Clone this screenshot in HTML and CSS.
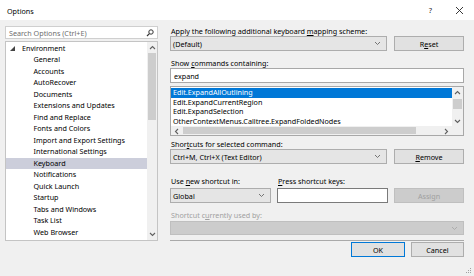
FILE: index.html
```html
<!DOCTYPE html>
<html lang="en">
<head>
    <meta charset="UTF-8">
    <title>Options</title>
    <link rel="stylesheet" href="styles.css">
</head>
<body>
    <div class="titlebar">
        <span class="title">Options</span>
        <span class="title-btn">?</span>
        <span class="title-btn">
            <svg width="9" height="9" viewBox="0 0 9 9"><path d="M1 1L8 8M8 1L1 8" stroke="#222" stroke-width="0.9"/></svg>
        </span>
    </div>

    <div class="content">
        <div class="nav">
            <div class="search">
                <span class="placeholder">Search Options (Ctrl+E)</span>
                <svg width="8" height="8" viewBox="0 0 8 8"><circle cx="5" cy="3" r="2.2" fill="none" stroke="#333" stroke-width="1"/><path d="M3.4 4.6L1 7" stroke="#333" stroke-width="1.2"/></svg>
            </div>
            <div class="tree">
                <div class="tree-items">
                    <div class="node root"><svg class="expander" width="5" height="5" viewBox="0 0 5 5"><path d="M5 0V5H0Z" fill="#444"/></svg>Environment</div>
                    <div class="node">General</div>
                    <div class="node">Accounts</div>
                    <div class="node">AutoRecover</div>
                    <div class="node">Documents</div>
                    <div class="node">Extensions and Updates</div>
                    <div class="node">Find and Replace</div>
                    <div class="node">Fonts and Colors</div>
                    <div class="node">Import and Export Settings</div>
                    <div class="node">International Settings</div>
                    <div class="node selected">Keyboard</div>
                    <div class="node">Notifications</div>
                    <div class="node">Quick Launch</div>
                    <div class="node">Startup</div>
                    <div class="node">Tabs and Windows</div>
                    <div class="node">Task List</div>
                    <div class="node">Web Browser</div>
                    <div class="node root"><svg class="expander" width="5" height="6" viewBox="0 0 5 6"><path d="M0.5 0.5L4 3L0.5 5.5Z" fill="none" stroke="#444" stroke-width="0.8"/></svg>Projects and Solutions</div>
                </div>
                <div class="vscroll">
                    <div class="sb-arrow"><svg width="7" height="5" viewBox="0 0 7 5"><path d="M1 4L3.5 1.5L6 4" fill="none" stroke="#606060" stroke-width="1.1"/></svg></div>
                    <div class="thumb tree-thumb"></div>
                    <div class="track"></div>
                    <div class="sb-arrow"><svg width="7" height="5" viewBox="0 0 7 5"><path d="M1 1L3.5 3.5L6 1" fill="none" stroke="#606060" stroke-width="1.1"/></svg></div>
                </div>
            </div>
        </div>

        <div class="keys">
            <div class="lbl">Apply the following additional keyboard <u>m</u>apping scheme:</div>
            <div class="row">
                <div class="select">(Default)<svg class="chev" width="7" height="5" viewBox="0 0 7 5"><path d="M1 1L3.5 3.5L6 1" fill="none" stroke="#666" stroke-width="0.9"/></svg></div>
                <div class="button">R<u>e</u>set</div>
            </div>

            <div class="lbl gap">Show <u>c</u>ommands containing:</div>
            <div class="input">expand</div>

            <div class="list">
                <div class="list-body">
                    <div class="list-items">
                        <div class="item selected">Edit.ExpandAllOutlining</div>
                        <div class="item">Edit.ExpandCurrentRegion</div>
                        <div class="item">Edit.ExpandSelection</div>
                        <div class="item">OtherContextMenus.Calltree.ExpandFoldedNodes</div>
                    </div>
                    <div class="vscroll">
                        <div class="sb-arrow"><svg width="7" height="5" viewBox="0 0 7 5"><path d="M1 4L3.5 1.5L6 4" fill="none" stroke="#606060" stroke-width="1.1"/></svg></div>
                        <div class="thumb list-thumb"></div>
                        <div class="track"></div>
                        <div class="sb-arrow"><svg width="7" height="5" viewBox="0 0 7 5"><path d="M1 1L3.5 3.5L6 1" fill="none" stroke="#606060" stroke-width="1.1"/></svg></div>
                    </div>
                </div>
                <div class="hscroll">
                    <div class="sb-arrow"><svg width="5" height="7" viewBox="0 0 5 7"><path d="M4 1L1.5 3.5L4 6" fill="none" stroke="#606060" stroke-width="1.1"/></svg></div>
                    <div class="thumb list-hthumb"></div>
                    <div class="track"></div>
                    <div class="sb-arrow"><svg width="5" height="7" viewBox="0 0 5 7"><path d="M1 1L3.5 3.5L1 6" fill="none" stroke="#606060" stroke-width="1.1"/></svg></div>
                    <div class="corner"></div>
                </div>
            </div>

            <div class="lbl gap-sm">Shor<u>t</u>cuts for selected command:</div>
            <div class="row">
                <div class="select">Ctrl+M, Ctrl+X (Text Editor)<svg class="chev" width="7" height="5" viewBox="0 0 7 5"><path d="M1 1L3.5 3.5L6 1" fill="none" stroke="#666" stroke-width="0.9"/></svg></div>
                <div class="button"><u>R</u>emove</div>
            </div>

            <div class="grid labels">
                <div class="lbl">Use <u>n</u>ew shortcut in:</div>
                <div class="lbl"><u>P</u>ress shortcut keys:</div>
            </div>
            <div class="grid">
                <div class="select">Global<svg class="chev" width="7" height="5" viewBox="0 0 7 5"><path d="M1 1L3.5 3.5L6 1" fill="none" stroke="#666" stroke-width="0.9"/></svg></div>
                <div class="input dark"></div>
                <div class="button disabled">Assign</div>
            </div>

            <div class="lbl gap disabled-text">Shortcut c<u>u</u>rrently used by:</div>
            <div class="select disabled"><svg class="chev" width="7" height="5" viewBox="0 0 7 5"><path d="M1 1L3.5 3.5L6 1" fill="none" stroke="#a8a8a8" stroke-width="0.9"/></svg></div>

            <div class="separator"></div>
        </div>
    </div>

    <div class="footer">
        <div class="button default">OK</div>
        <div class="button cancel">Cancel</div>
    </div>

    <svg class="grip" width="6" height="6" viewBox="0 0 6 6"><rect x="4" y="0" width="1" height="1" fill="#a0a0a0"/><rect x="2" y="2" width="1" height="1" fill="#a0a0a0"/><rect x="4" y="2" width="1" height="1" fill="#a0a0a0"/><rect x="0" y="4" width="1" height="1" fill="#a0a0a0"/><rect x="2" y="4" width="1" height="1" fill="#a0a0a0"/><rect x="4" y="4" width="1" height="1" fill="#a0a0a0"/></svg>
</body>
</html>
```

FILE: styles.css
```css
body {
    margin: 0;
    width: 474px;
    height: 276px;
    overflow: hidden;
    position: relative;
    background-color: #f0f0f0;
    font-family: "Noto Sans", "Open Sans", sans-serif;
    font-size: 7.2px;
    color: #000;
}

u {
    text-underline-offset: 1px;
    text-decoration-thickness: 0.6px;
}

.titlebar {
    height: 20px;
    background-color: #fff;
    display: flex;
    align-items: center;
}

.title {
    flex: 1;
    padding-left: 7px;
    padding-top: 1px;
}

.title-btn {
    width: 29px;
    height: 20px;
    display: flex;
    align-items: center;
    justify-content: center;
    font-size: 7.5px;
    color: #222;
}

.content {
    display: flex;
    gap: 12px;
    padding: 6px 10px 0 5px;
}

/* left: options tree */
.nav {
    width: 153px;
    display: flex;
    flex-direction: column;
    gap: 2px;
}

.search {
    height: 13px;
    box-sizing: border-box;
    border: 1px solid #cfcfcf;
    background-color: #fff;
    display: flex;
    align-items: center;
    justify-content: space-between;
    padding: 0 3px 0 3px;
}

.placeholder {
    color: #6d6d6d;
}

.tree {
    height: 200px;
    box-sizing: border-box;
    border: 1px solid #c4c4c4;
    background-color: #fff;
    display: flex;
}

.tree-items {
    flex: 1;
    overflow: hidden;
    padding-top: 0.5px;
}

.node {
    height: 11.5px;
    line-height: 11.5px;
    padding-left: 27.5px;
    white-space: nowrap;
}

.node.root {
    padding-left: 4px;
}

.node .expander {
    margin-right: 7px;
    vertical-align: 0;
}

.node.selected {
    background-color: #cccedb;
}

.vscroll {
    width: 10px;
    background-color: #f0f0f0;
    display: flex;
    flex-direction: column;
}

.sb-arrow {
    height: 11px;
    flex: none;
    display: flex;
    align-items: center;
    justify-content: center;
}

.hscroll .sb-arrow {
    width: 11px;
    height: auto;
}

.thumb {
    background-color: #cdcdcd;
    flex: none;
}

.tree-thumb {
    height: 67px;
    margin: 0 1px;
}

.track {
    flex: 1;
}

/* right: keyboard page */
.keys {
    width: 294px;
    display: flex;
    flex-direction: column;
}

.lbl {
    height: 10px;
    line-height: 10px;
    padding-left: 1px;
    white-space: nowrap;
}

.lbl.gap {
    margin-top: 7px;
}

.lbl.gap-sm {
    margin-top: 3px;
}

.disabled-text {
    color: #a0a0a0;
    margin-bottom: 1px;
}

.row {
    height: 15px;
    display: flex;
    gap: 7px;
}

.row .select {
    width: 217px;
}

.row .button {
    width: 70px;
}

.select {
    height: 15px;
    box-sizing: border-box;
    border: 1px solid #adadad;
    background-color: #e5e5e5;
    display: flex;
    align-items: center;
    padding: 0 5px 0 2px;
}

.select .chev {
    margin-left: auto;
}

.select.disabled {
    height: 14px;
    background-color: #cccccc;
    border-color: #bfbfbf;
}

.button {
    height: 15px;
    box-sizing: border-box;
    border: 1px solid #adadad;
    background-color: #e1e1e1;
    display: flex;
    align-items: center;
    justify-content: center;
}

.button.disabled {
    background-color: #cccccc;
    border-color: #bfbfbf;
    color: #a0a0a0;
}

.input {
    height: 15px;
    box-sizing: border-box;
    border: 1px solid #a8a8a8;
    background-color: #fff;
    display: flex;
    align-items: center;
    padding-left: 3px;
}

.input.dark {
    border-color: #7a7a7a;
}

.list {
    margin-top: 3px;
    height: 50px;
    box-sizing: border-box;
    border: 1px solid #a8a8a8;
    background-color: #fff;
    display: flex;
    flex-direction: column;
}

.list-body {
    flex: 1;
    display: flex;
    overflow: hidden;
}

.list-items {
    flex: 1;
    overflow: hidden;
    padding-top: 1px;
}

.list .vscroll {
    width: 11px;
}

.list .sb-arrow {
    height: 10px;
}

.item {
    height: 9.6px;
    line-height: 9.6px;
    padding-left: 2px;
    white-space: nowrap;
}

.item.selected {
    background-color: #0078d7;
    color: #fff;
}

.list-thumb {
    height: 10px;
    margin: 2px 1px 0;
}

.hscroll {
    height: 9px;
    flex: none;
    display: flex;
    background-color: #f0f0f0;
}

.list-hthumb {
    width: 233px;
    margin: 1px 0 1px 1px;
}

.corner {
    width: 11px;
}

.grid {
    display: grid;
    grid-template-columns: 101px 111px 70px;
    column-gap: 6px;
    height: 15px;
}

.grid.labels {
    margin-top: 12px;
    height: 10px;
    margin-bottom: 2px;
}

.separator {
    margin-top: 5px;
    height: 1px;
    background-color: #a9a9a9;
}

.footer {
    display: flex;
    justify-content: flex-end;
    gap: 6px;
    padding: 1px 10px 0 0;
}

.footer .button {
    width: 54px;
}

.footer .button.cancel {
    width: 53px;
}

.button.default {
    border: 1.5px solid #0078d7;
}

.grip {
    position: absolute;
    right: 2px;
    bottom: 2px;
}
```
